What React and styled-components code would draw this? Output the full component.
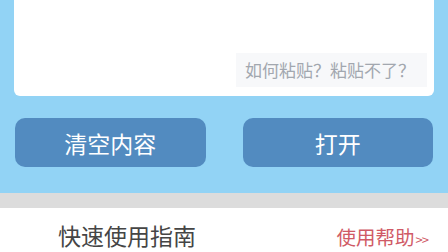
import styled, { createGlobalStyle } from "styled-components";

const GlobalStyle = createGlobalStyle`
  html, body {
    margin: 0;
    padding: 0;
    background: #ffffff;
    font-family: "Noto Sans CJK SC", "Noto Sans", sans-serif;
  }
`;

const Page = styled.div`
  width: 448px;
  height: 252px;
  overflow: hidden;
  display: flex;
  flex-direction: column;
`;

const BluePanel = styled.div`
  background: #92d3f5;
  padding: 0 14px 26px 14px;
  display: flex;
  flex-direction: column;
`;

const TextArea = styled.div`
  height: 96px;
  background: #ffffff;
  border-radius: 0 0 6px 6px;
  display: flex;
  flex-direction: column;
  justify-content: flex-end;
  align-items: flex-end;
  padding: 0 7px 9px 0;
  box-sizing: border-box;
`;

const HintLink = styled.div`
  width: 191px;
  height: 34px;
  box-sizing: border-box;
  background: #f7f8fa;
  color: #a2a7af;
  font-size: 17px;
  line-height: 34px;
  padding-left: 9px;
  white-space: nowrap;
`;

const ButtonRow = styled.div`
  margin-top: 22px;
  padding: 0 1px;
  display: flex;
  gap: 37px;
`;

const ActionButton = styled.button`
  flex: 1;
  height: 49px;
  border: none;
  border-radius: 10px;
  background: #528bc0;
  color: #ffffff;
  font-family: "Noto Sans CJK SC", "Noto Sans", sans-serif;
  font-size: 23px;
  padding: 0;
  cursor: pointer;
`;

const Divider = styled.div`
  height: 15px;
  background: #dcdcdc;
`;

const Footer = styled.div`
  flex: 1;
  background: #ffffff;
  display: flex;
  justify-content: space-between;
  align-items: flex-start;
  padding: 14px 20px 0 58px;
`;

const GuideTitle = styled.div`
  font-size: 23px;
  line-height: 26px;
  color: #454545;
`;

const HelpLink = styled.a`
  margin-top: 3px;
  font-size: 19.5px;
  line-height: 24px;
  color: #d05a66;
  text-decoration: none;
  white-space: nowrap;
`;

const Arrows = styled.span`
  font-size: 13px;
  letter-spacing: -1px;
  margin-left: 1px;
`;

export default function App() {
  return (
    <Page>
      <GlobalStyle />
      <BluePanel>
        <TextArea>
          <HintLink>如何粘贴？粘贴不了？</HintLink>
        </TextArea>
        <ButtonRow>
          <ActionButton>清空内容</ActionButton>
          <ActionButton>打开</ActionButton>
        </ButtonRow>
      </BluePanel>
      <Divider />
      <Footer>
        <GuideTitle>快速使用指南</GuideTitle>
        <HelpLink>
          使用帮助<Arrows>&gt;&gt;</Arrows>
        </HelpLink>
      </Footer>
    </Page>
  );
}
